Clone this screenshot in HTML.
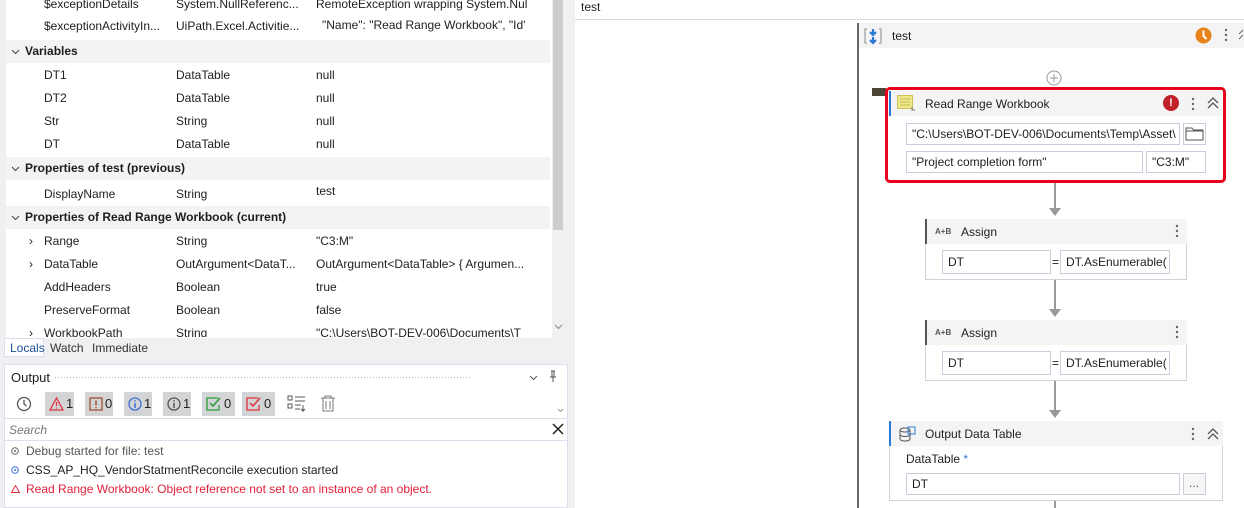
<!DOCTYPE html>
<html><head><meta charset="utf-8"><style>
*{box-sizing:border-box;margin:0;padding:0}
body{width:1244px;height:508px;overflow:hidden;background:#eef0f2;font-family:"Liberation Sans",sans-serif;font-size:12px;color:#1e1e1e;position:relative}
.a{position:absolute;white-space:nowrap}
.row{position:absolute;left:6px;width:544px;height:23px}
.hdr{background:#f3f3f3;font-weight:bold}
.box{position:absolute;background:#fff;border:1px solid #ccd;}
.btn{position:absolute;top:392px;height:24px;background:#d2d4d6;font-size:13px;line-height:24px;display:flex;align-items:center;gap:2px;padding-left:4px}
</style></head><body>
<div class="a" style="left:6px;top:0;width:558px;height:338px;background:#fff"></div>
<div class="a" style="left:552px;top:0;width:12px;height:338px;background:#f0f0f0"></div>
<div class="a" style="left:553px;top:0;width:10px;height:230px;background:#cdcdcd"></div>
<svg class="a" style="left:554px;top:324px" width="9" height="6"><path d="M1 1l3.5 3.5L8 1" stroke="#888" fill="none"/></svg>
<div class="a" style="left:44px;top:-3px">$exceptionDetails</div><div class="a" style="left:176px;top:-3px">System.NullReferenc...</div><div class="a" style="left:316px;top:-3px">RemoteException wrapping System.Nul</div>
<div class="a" style="left:44px;top:19px">$exceptionActivityIn...</div><div class="a" style="left:176px;top:19px">UiPath.Excel.Activitie...</div><div class="a" style="left:322px;top:18px">"Name": "Read Range Workbook",  "Id'</div>
<div class="row hdr" style="top:40px"></div><svg class="a" style="left:11px;top:49px" width="9" height="6"><path d="M1 1l3.5 3.5L8 1" stroke="#444" fill="none"/></svg><div class="a" style="left:25px;top:44px;font-weight:bold">Variables</div>
<div class="a" style="left:44px;top:68px">DT1</div><div class="a" style="left:176px;top:68px">DataTable</div><div class="a" style="left:316px;top:68px">null</div>
<div class="a" style="left:44px;top:91px">DT2</div><div class="a" style="left:176px;top:91px">DataTable</div><div class="a" style="left:316px;top:91px">null</div>
<div class="a" style="left:44px;top:114px">Str</div><div class="a" style="left:176px;top:114px">String</div><div class="a" style="left:316px;top:114px">null</div>
<div class="a" style="left:44px;top:137px">DT</div><div class="a" style="left:176px;top:137px">DataTable</div><div class="a" style="left:316px;top:137px">null</div>
<div class="row hdr" style="top:157px"></div><svg class="a" style="left:11px;top:166px" width="9" height="6"><path d="M1 1l3.5 3.5L8 1" stroke="#444" fill="none"/></svg><div class="a" style="left:25px;top:161px;font-weight:bold">Properties of test (previous)</div>
<div class="a" style="left:44px;top:187px">DisplayName</div><div class="a" style="left:176px;top:187px">String</div><div class="a" style="left:316px;top:184px">test</div>
<div class="row hdr" style="top:206px"></div><svg class="a" style="left:11px;top:215px" width="9" height="6"><path d="M1 1l3.5 3.5L8 1" stroke="#444" fill="none"/></svg><div class="a" style="left:25px;top:210px;font-weight:bold">Properties of Read Range Workbook (current)</div>
<div class="a" style="left:29px;top:234px">&#8250;</div><div class="a" style="left:44px;top:234px">Range</div><div class="a" style="left:176px;top:234px">String</div><div class="a" style="left:316px;top:234px">"C3:M"</div>
<div class="a" style="left:29px;top:257px">&#8250;</div><div class="a" style="left:44px;top:257px">DataTable</div><div class="a" style="left:176px;top:257px">OutArgument&lt;DataT...</div><div class="a" style="left:316px;top:257px">OutArgument&lt;DataTable&gt; { Argumen...</div>
<div class="a" style="left:44px;top:280px">AddHeaders</div><div class="a" style="left:176px;top:280px">Boolean</div><div class="a" style="left:316px;top:280px">true</div>
<div class="a" style="left:44px;top:303px">PreserveFormat</div><div class="a" style="left:176px;top:303px">Boolean</div><div class="a" style="left:316px;top:303px">false</div>
<div class="a" style="left:0;top:326px;width:552px;height:11px;overflow:hidden"><div class="a" style="left:29px;top:0">&#8250;</div><div class="a" style="left:44px;top:0">WorkbookPath</div><div class="a" style="left:176px;top:0">String</div><div class="a" style="left:316px;top:0">"C:\Users\BOT-DEV-006\Documents\T</div></div>
<div class="a" style="left:4px;top:338px;width:40px;height:19px;background:#fff;border:1px solid #dde"></div>
<div class="a" style="left:10px;top:341px;color:#1a4f9c">Locals</div>
<div class="a" style="left:50px;top:341px;color:#333">Watch</div>
<div class="a" style="left:92px;top:341px;color:#333">Immediate</div>
<div class="a" style="left:4px;top:364px;width:564px;height:144px;background:#fff;border:1px solid #dde"></div>
<div class="a" style="left:11px;top:370px;font-size:13px">Output</div>
<div class="a" style="left:54px;top:376px;width:418px;height:4px;background-image:radial-gradient(#bbb 0.6px,transparent 0.8px);background-size:3px 3px"></div>
<svg class="a" style="left:529px;top:375px" width="9" height="6"><path d="M1 1l3.5 3.5L8 1" stroke="#555" fill="none"/></svg>
<svg class="a" style="left:549px;top:370px" width="8" height="12"><path d="M2 1h4M3 1v6M5 1v6M1 7h6M4 7v5" stroke="#555" fill="none"/></svg>
<svg class="a" style="left:16px;top:396px" width="16" height="16"><circle cx="8" cy="8" r="6.5" fill="none" stroke="#555" stroke-width="1.3"/><path d="M8 4v4l2.5 2" stroke="#555" fill="none" stroke-width="1.3"/></svg>
<div class="btn" style="left:45px;width:29px"><svg width="15" height="14"><path d="M7.5 1L14 13H1z M7.5 5v4 M7.5 10.5v1" stroke="#e0303e" fill="none" stroke-width="1.3"/></svg>1</div>
<div class="btn" style="left:85px;width:28px"><svg width="14" height="14"><rect x="1" y="1" width="12" height="12" stroke="#a0522d" fill="none" stroke-width="1.3"/><path d="M7 3.5v5M7 10v1.3" stroke="#a0522d" stroke-width="1.5"/></svg>0</div>
<div class="btn" style="left:124px;width:28px"><svg width="14" height="14"><circle cx="7" cy="7" r="6" stroke="#3b6fd6" fill="none" stroke-width="1.3"/><path d="M7 6v5M7 3.3v1.3" stroke="#3b6fd6" stroke-width="1.5"/></svg>1</div>
<div class="btn" style="left:163px;width:28px"><svg width="14" height="14"><circle cx="7" cy="7" r="6" stroke="#555" fill="none" stroke-width="1.3"/><path d="M7 6v5M7 3.3v1.3" stroke="#555" stroke-width="1.5"/></svg>1</div>
<div class="btn" style="left:202px;width:33px"><svg width="16" height="14"><path d="M12 1H1v12h12V8" stroke="#2a9a3a" fill="none" stroke-width="1.3"/><path d="M4 6l3 3 7-8" stroke="#2a9a3a" fill="none" stroke-width="1.5"/></svg>0</div>
<div class="btn" style="left:242px;width:33px"><svg width="16" height="14"><path d="M12 1H1v12h12V8" stroke="#e0303e" fill="none" stroke-width="1.3"/><path d="M4 6l3 3 7-8" stroke="#e0303e" fill="none" stroke-width="1.5"/></svg>0</div>
<svg class="a" style="left:287px;top:395px" width="20" height="18"><g stroke="#555" fill="none"><rect x="1" y="1" width="4" height="4"/><rect x="1" y="9" width="4" height="4"/><path d="M8 2h10M8 6h10M8 10h6M8 14h5M16 10v6l-2-2M16 16l2-2"/></g></svg>
<svg class="a" style="left:320px;top:395px" width="16" height="18"><g stroke="#777" fill="none"><path d="M1 3h14M5 3V1h6v2M3 3v13h10V3M6 6v8M10 6v8"/></g></svg>
<svg class="a" style="left:557px;top:408px" width="7" height="5"><path d="M1 1l2.5 2.5L6 1" stroke="#999" fill="none"/></svg>
<div class="a" style="left:5px;top:418px;width:562px;height:23px;border-top:1px solid #dde;border-bottom:1px solid #dde"></div>
<div class="a" style="left:9px;top:423px;font-style:italic;color:#777">Search</div>
<svg class="a" style="left:552px;top:423px" width="12" height="12"><path d="M1 1l10 10M11 1L1 11" stroke="#222" stroke-width="1.5"/></svg>
<svg class="a" style="left:11px;top:447px" width="8" height="8"><circle cx="4" cy="4" r="3.3" stroke="#666" fill="none"/><circle cx="4" cy="4" r="1" fill="#666"/></svg><div class="a" style="left:26px;top:444px;color:#555">Debug started for file: test</div>
<svg class="a" style="left:11px;top:466px" width="8" height="8"><circle cx="4" cy="4" r="3.3" stroke="#3b6fd6" fill="none"/><circle cx="4" cy="4" r="1" fill="#3b6fd6"/></svg><div class="a" style="left:26px;top:463px">CSS_AP_HQ_VendorStatmentReconcile execution started</div>
<svg class="a" style="left:11px;top:485px" width="9" height="8"><path d="M4.5 0.5L8.5 7.5H0.5z" stroke="#e0303e" fill="none"/></svg><div class="a" style="left:26px;top:482px;color:#e0203a">Read Range Workbook: Object reference not set to an instance of an object.</div>
<div class="a" style="left:575px;top:0;width:669px;height:508px;background:#fff"></div>
<div class="a" style="left:575px;top:19px;width:669px;height:1px;background:#d6d8da"></div>
<div class="a" style="left:581px;top:0;color:#222">test</div>
<div class="a" style="left:857px;top:23px;width:2px;height:485px;background:#666"></div>
<div class="a" style="left:859px;top:23px;width:385px;height:25px;background:#f4f4f4"></div>
<svg class="a" style="left:864px;top:27px" width="18" height="18"><path d="M3 2H1v14h2M15 2h2v14h-2" stroke="#888" fill="none"/><path d="M9 2v5M6 5l3 3 3-3M9 10v5M6 13l3 3 3-3" stroke="#2a78d6" stroke-width="2.2" fill="none"/></svg>
<div class="a" style="left:892px;top:29px">test</div>
<svg class="a" style="left:1195px;top:27px" width="17" height="17"><circle cx="8.5" cy="8.5" r="8" fill="#e8821a"/><path d="M8.5 3.5v5.5l3 3" stroke="#fff" stroke-width="2" fill="none"/></svg>
<svg class="a" style="left:1224px;top:28px" width="4" height="14"><circle cx="2" cy="2" r="1.2" fill="#666"/><circle cx="2" cy="7" r="1.2" fill="#666"/><circle cx="2" cy="12" r="1.2" fill="#666"/></svg>
<svg class="a" style="left:1238px;top:29px" width="6" height="12"><path d="M1 5l4-4M1 10l4-4" stroke="#666" fill="none"/></svg>
<svg class="a" style="left:1046px;top:70px" width="16" height="16"><circle cx="8" cy="8" r="7" stroke="#999" fill="none"/><path d="M8 4v8M4 8h8" stroke="#999"/></svg>
<div class="a" style="left:872px;top:88px;width:14px;height:8px;background:#4a4535"></div>
<div class="a" style="left:885px;top:87px;width:341px;height:96px;border:3px solid #e8001c;border-radius:5px;background:#fff"></div>
<div class="a" style="left:889px;top:91px;width:333px;height:25px;background:#f4f4f4;border-left:2px solid #2a78d6"></div>
<svg class="a" style="left:897px;top:95px" width="20" height="17"><rect x="0.5" y="0.5" width="15" height="13" fill="#eee68a" stroke="#cbbf55"/><path d="M3 4h10M3 7h10M3 10h10" stroke="#c9bc50"/><path d="M15 12v3h3" stroke="#777" fill="none"/></svg>
<div class="a" style="left:925px;top:97px">Read Range Workbook</div>
<div class="a" style="left:1163px;top:95px;width:16px;height:16px;border-radius:50%;background:#c0202a;color:#fff;font-weight:bold;text-align:center;line-height:16px;font-size:11px">!</div>
<svg class="a" style="left:1191px;top:97px" width="4" height="14"><circle cx="2" cy="2" r="1.2" fill="#666"/><circle cx="2" cy="7" r="1.2" fill="#666"/><circle cx="2" cy="12" r="1.2" fill="#666"/></svg>
<svg class="a" style="left:1207px;top:97px" width="12" height="12"><path d="M1 6l5-5 5 5M1 11l5-5 5 5" stroke="#555" fill="none" stroke-width="1.3"/></svg>
<div class="box" style="left:906px;top:123px;width:274px;height:22px"></div><div class="a" style="left:912px;top:127px">"C:\Users\BOT-DEV-006\Documents\Temp\Asset\</div>
<div class="box" style="left:1183px;top:123px;width:23px;height:22px"></div>
<svg class="a" style="left:1185px;top:127px" width="19" height="14"><path d="M1 1h6l1.5 2H18v10H1z M1 4h17" stroke="#555" fill="none"/></svg>
<div class="box" style="left:906px;top:151px;width:237px;height:22px"></div><div class="a" style="left:912px;top:155px">"Project completion form"</div>
<div class="box" style="left:1146px;top:151px;width:60px;height:22px"></div><div class="a" style="left:1152px;top:155px">"C3:M"</div>
<div class="a" style="left:1054px;top:183px;width:2px;height:30px;background:#999"></div><div class="a" style="left:1049px;top:208px;border:6px solid transparent;border-top:8px solid #999"></div>
<div class="a" style="left:1054px;top:280px;width:2px;height:35px;background:#999"></div><div class="a" style="left:1049px;top:309px;border:6px solid transparent;border-top:8px solid #999"></div>
<div class="a" style="left:1054px;top:380px;width:2px;height:35px;background:#999"></div><div class="a" style="left:1049px;top:410px;border:6px solid transparent;border-top:8px solid #999"></div>
<div class="a" style="left:1054px;top:500px;width:2px;height:8px;background:#999"></div>
<div class="a" style="left:925px;top:219px;width:262px;height:61px;border:1px solid #d0d2d4;background:#fff"></div>
<div class="a" style="left:925px;top:219px;width:262px;height:25px;background:#f4f4f4;border-left:2px solid #555"></div>
<div class="a" style="left:935px;top:227px;font-size:8px;font-weight:bold;color:#555">A+B</div><div class="a" style="left:961px;top:225px">Assign</div>
<svg class="a" style="left:1175px;top:224px" width="4" height="14"><circle cx="2" cy="2" r="1.2" fill="#666"/><circle cx="2" cy="7" r="1.2" fill="#666"/><circle cx="2" cy="12" r="1.2" fill="#666"/></svg>
<div class="box" style="left:942px;top:250px;width:109px;height:24px"></div><div class="a" style="left:948px;top:255px">DT</div>
<div class="a" style="left:1052px;top:255px">=</div>
<div class="box" style="left:1060px;top:250px;width:110px;height:24px;overflow:hidden"><span style="position:absolute;left:5px;top:4px">DT.AsEnumerable(</span></div>
<div class="a" style="left:925px;top:320px;width:262px;height:61px;border:1px solid #d0d2d4;background:#fff"></div>
<div class="a" style="left:925px;top:320px;width:262px;height:25px;background:#f4f4f4;border-left:2px solid #555"></div>
<div class="a" style="left:935px;top:328px;font-size:8px;font-weight:bold;color:#555">A+B</div><div class="a" style="left:961px;top:326px">Assign</div>
<svg class="a" style="left:1175px;top:325px" width="4" height="14"><circle cx="2" cy="2" r="1.2" fill="#666"/><circle cx="2" cy="7" r="1.2" fill="#666"/><circle cx="2" cy="12" r="1.2" fill="#666"/></svg>
<div class="box" style="left:942px;top:351px;width:109px;height:24px"></div><div class="a" style="left:948px;top:356px">DT</div>
<div class="a" style="left:1052px;top:356px">=</div>
<div class="box" style="left:1060px;top:351px;width:110px;height:24px;overflow:hidden"><span style="position:absolute;left:5px;top:4px">DT.AsEnumerable(</span></div>
<div class="a" style="left:889px;top:421px;width:334px;height:80px;border:1px solid #d0d2d4;background:#fff"></div>
<div class="a" style="left:889px;top:421px;width:334px;height:25px;background:#f4f4f4;border-left:2px solid #2a78d6"></div>
<svg class="a" style="left:898px;top:426px" width="18" height="16"><g stroke="#555" fill="none"><ellipse cx="7" cy="4" rx="5" ry="2"/><path d="M2 4v9c0 1 2 2 5 2s5-1 5-2V4M2 8.5c0 1 2 2 5 2s5-1 5-2"/><rect x="10" y="1" width="7" height="7" stroke="#2a78d6"/></g></svg>
<div class="a" style="left:925px;top:427px">Output Data Table</div>
<svg class="a" style="left:1191px;top:427px" width="4" height="14"><circle cx="2" cy="2" r="1.2" fill="#666"/><circle cx="2" cy="7" r="1.2" fill="#666"/><circle cx="2" cy="12" r="1.2" fill="#666"/></svg>
<svg class="a" style="left:1207px;top:428px" width="12" height="12"><path d="M1 6l5-5 5 5M1 11l5-5 5 5" stroke="#555" fill="none" stroke-width="1.3"/></svg>
<div class="a" style="left:906px;top:452px">DataTable <span style="color:#2a78d6">*</span></div>
<div class="box" style="left:906px;top:473px;width:274px;height:22px"></div><div class="a" style="left:912px;top:477px">DT</div>
<div class="box" style="left:1183px;top:473px;width:23px;height:22px;background:#f6f6f6"></div><div class="a" style="left:1189px;top:476px;color:#555">...</div>
</body></html>
